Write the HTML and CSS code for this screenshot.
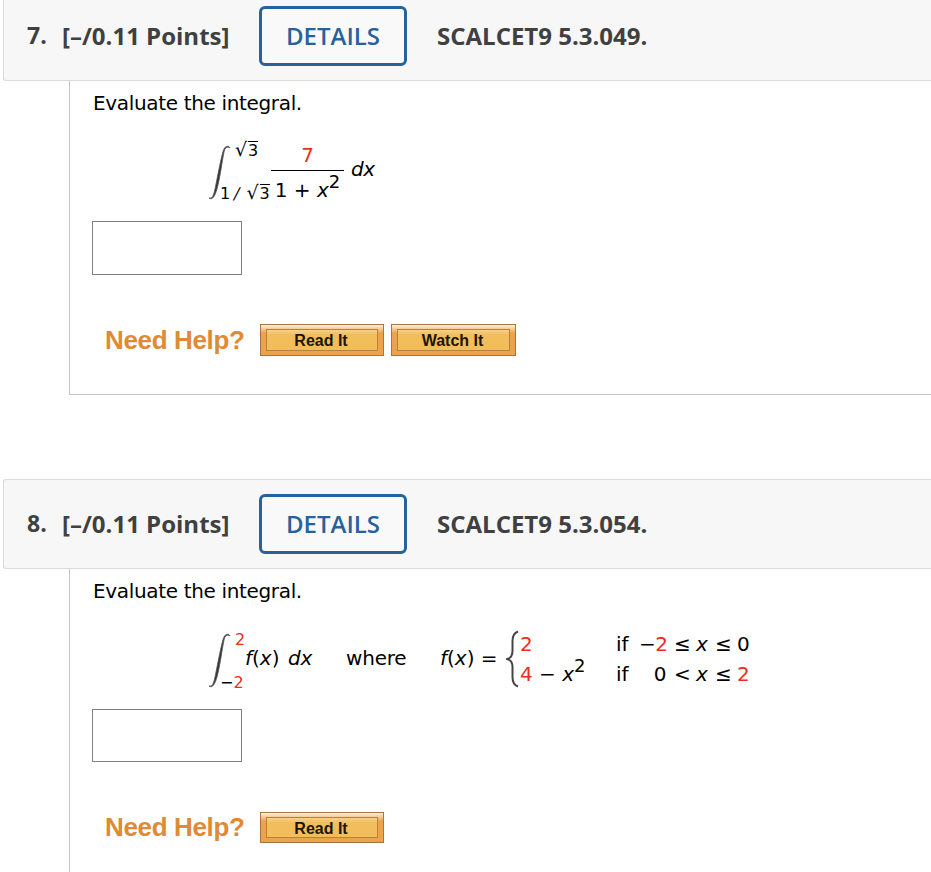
FILE: index.html
```html
<!DOCTYPE html>
<html lang="en">
<head>
    <meta charset="UTF-8">
    <meta name="viewport" content="width=device-width, initial-scale=1.0">
    <title>Assignment</title>

    <link rel="stylesheet" href="styles.css">
</head>

<body>

    <section class="question">
        <div class="question__header">
            <span class="question__number">7.</span>
            <span class="question__points">[–/0.11 Points]</span>
            <button class="question__details">DETAILS</button>
            <span class="question__name">SCALCET9 5.3.049.</span>
        </div>

        <div class="question__body">
            <p class="question__text">Evaluate the integral.</p>

            <div class="formula">
                <svg class="formula__integral" width="24" height="56" viewBox="0 0 24 56">
                    <path d="M22 3C21 .5 17 0 15.200 6C12.500 15 9.500 32 7 44C5.500 51 4 54 1 53C4.500 55.500 7 51 9 44C12 33 14 17 16 7C17.200 1.500 20 1.500 22 3Z" />
                </svg>
                <div class="limits limits_root">
                    <span class="limits__top"><span class="root">√</span><span class="root__value">3</span></span>
                    <span class="limits__bottom">1<span class="limits__slash">/</span><span class="root">√</span><span class="root__value">3</span></span>
                </div>
                <div class="fraction">
                    <span class="fraction__top _red">7</span>
                    <span class="fraction__bottom">1 + <i>x</i><sup>2</sup></span>
                </div>
                <i class="formula__dx">dx</i>
            </div>

            <input class="question__answer" type="text">

            <div class="help">
                <span class="help__title">Need Help?</span>
                <button class="help__button"><span>Read It</span></button>
                <button class="help__button help__button_watch"><span>Watch It</span></button>
            </div>
        </div>
    </section>

    <section class="question">
        <div class="question__header">
            <span class="question__number">8.</span>
            <span class="question__points">[–/0.11 Points]</span>
            <button class="question__details">DETAILS</button>
            <span class="question__name">SCALCET9 5.3.054.</span>
        </div>

        <div class="question__body">
            <p class="question__text">Evaluate the integral.</p>

            <div class="formula">
                <svg class="formula__integral" width="24" height="56" viewBox="0 0 24 56">
                    <path d="M22 3C21 .5 17 0 15.200 6C12.500 15 9.500 32 7 44C5.500 51 4 54 1 53C4.500 55.500 7 51 9 44C12 33 14 17 16 7C17.200 1.500 20 1.500 22 3Z" />
                </svg>
                <div class="limits">
                    <span class="limits__top _red">2</span>
                    <span class="limits__bottom">−<span class="_red">2</span></span>
                </div>
                <span class="formula__func"><i>f</i>(<i>x</i>) <i>dx</i></span>
                <span class="formula__where">where</span>
                <span class="formula__equal"><i>f</i>(<i>x</i>) =</span>
                <svg class="formula__brace" width="13" height="58" viewBox="0 0 13 58">
                    <path d="M12 1.500C7.500 3 6.500 6 6.500 11V21C6.500 25.500 5 28 1.200 29C5 30 6.500 32.500 6.500 37V47C6.500 52 7.500 55 12 56.500" />
                </svg>
                <div class="cases">
                    <span class="_red">2</span>
                    <span>if</span>
                    <span class="cases__from">−<span class="_red">2</span></span>
                    <span>≤</span>
                    <i>x</i>
                    <span>≤</span>
                    <span>0</span>

                    <span><span class="_red">4</span> − <i>x</i><sup>2</sup></span>
                    <span>if</span>
                    <span class="cases__from">0</span>
                    <span>&lt;</span>
                    <i>x</i>
                    <span>≤</span>
                    <span class="_red">2</span>
                </div>
            </div>

            <input class="question__answer" type="text">

            <div class="help">
                <span class="help__title">Need Help?</span>
                <button class="help__button"><span>Read It</span></button>
            </div>
        </div>
    </section>

</body>

</html>
```
FILE: styles.css
```css
* {
    box-sizing: border-box;
}

body {
    margin: 0;
    background: #fff;
    color: #000;
    font: 20px/24px Verdana, "DejaVu Sans", sans-serif;
}

button {
    margin: 0;
    padding: 0;
}

._red {
    color: #ee2c20;
}

/* ========== QUESTION =========== */
.question {
    display: flow-root;
    margin: 0 0 84px 3px;
}

.question:first-child {
    margin-top: -9px;
}

.question:last-child {
    margin-bottom: 0;
}

.question__header {
    display: flex;
    align-items: center;
    height: 90px;
    padding-left: 22px;
    border: 1px solid #dcdcdc;
    border-right: 0;
    border-radius: 3px 0 0 3px;
    background: #f7f7f7;
    color: #404040;
    font: bold 24px/34px "Open Sans", sans-serif;
    white-space: nowrap;
}

.question__number {
    width: 36px;
    padding: 0 0 2px 1px;
    font-size: 23px;
}

.question__points {
    width: 197px;
}

.question__details {
    width: 148px;
    height: 60px;
    margin-right: 30px;
    border: 3px solid #27629b;
    border-radius: 6px;
    background: #f9f9f9;
    color: #27629b;
    font: 600 24px/34px "Open Sans", sans-serif;
}

.question__body {
    height: 314px;
    margin-left: 66px;
    padding-left: 22px;
    border-left: 1px solid #c4c4c4;
    border-bottom: 1px solid #c4c4c4;
}

.question:last-child .question__body {
    height: 303px;
    border-bottom: 0;
}

.question__text {
    height: 44px;
    margin: 0;
    padding: 10px 0 0 1px;
    letter-spacing: -.34px;
}

.question__answer {
    display: block;
    width: 150px;
    height: 54px;
    border: 1px solid #808080;
    background: #fff;
}

.question:last-child .question__answer {
    height: 53px;
}

/* ========== FORMULA =========== */
.formula {
    display: flex;
    align-items: flex-start;
    height: 96px;
    padding-left: 117px;
    white-space: nowrap;
}

.formula sup {
    font-size: 18px;
    line-height: 0;
    vertical-align: 9px;
}

.formula__integral {
    flex: none;
    margin: 20px -13px 0 -1px;
    fill: #333;
    stroke: #555;
    stroke-width: .8;
}

.limits {
    display: flex;
    flex-direction: column;
    flex: none;
    width: 25px;
    padding: 17px 0 0 1px;
    font-size: 16px;
    line-height: 20px;
}

.limits_root {
    width: 52px;
    padding-top: 14px;
}

.limits__top {
    margin-left: 15px;
}

.limits__bottom {
    margin-top: 23px;
}

.limits_root .limits__bottom {
    margin-top: 21px;
}

.limits__slash {
    display: inline-block;
    margin: 0 7px 0 4px;
    transform: skewX(-12deg);
}

.root {
    display: inline-block;
    width: 13px;
    font-size: 19px;
}

.root__value {
    display: inline-block;
    height: 16px;
    border-top: 1px solid #000;
    line-height: 18px;
}

.fraction {
    width: 73px;
    margin: 18px 7px 0 0;
    text-align: center;
}

.fraction span {
    display: block;
}

.fraction__top {
    height: 27px;
}

.fraction .fraction__bottom {
    padding-top: 7px;
    border-top: 1px solid #000;
}

.formula__dx {
    margin-top: 32px;
    letter-spacing: -.4px;
}

.formula__func {
    width: 102px;
    margin-top: 33px;
    padding-left: 1px;
    word-spacing: 2px;
}

.formula__where {
    width: 94px;
    margin-top: 33px;
    letter-spacing: -.2px;
}

.formula__equal {
    width: 66px;
    margin-top: 33px;
}

.formula__brace {
    flex: none;
    margin: 17px 1px 0 0;
    fill: none;
    stroke: #444;
    stroke-width: 2;
}

.cases {
    display: grid;
    grid-template: 30px 30px / 96px 23px 35px 22px 19px 22px 14px;
    margin-top: 19px;
}

.cases__from {
    padding-right: 8px;
    text-align: right;
    letter-spacing: -.5px;
}

/* ========== HELP =========== */
.help {
    display: flex;
    align-items: center;
    gap: 7px;
    height: 32px;
    margin: 49px 0 0 13px;
}

.question:last-child .help {
    height: 31px;
    margin-top: 50px;
}

.help__title {
    width: 148px;
    padding-bottom: 1px;
    color: #e08a35;
    font: bold 26px/30px "Liberation Sans", Arial, sans-serif;
    letter-spacing: -.35px;
    white-space: nowrap;
}

.help__button {
    width: 124px;
    height: 100%;
    padding: 4px 5px;
    border: 1px solid #a97440;
    background: linear-gradient(#fff0dc, #eda24c 8px);
    color: #1c1503;
    font: bold 16px/22px "Liberation Sans", Arial, sans-serif;
}

.help__button_watch {
    width: 125px;
}

.help__button span {
    display: block;
    height: 100%;
    padding-right: 2px;
    border: 1px solid #b5823c;
    background: linear-gradient(#f6d08c, #f2be5b 5px);
}
```
